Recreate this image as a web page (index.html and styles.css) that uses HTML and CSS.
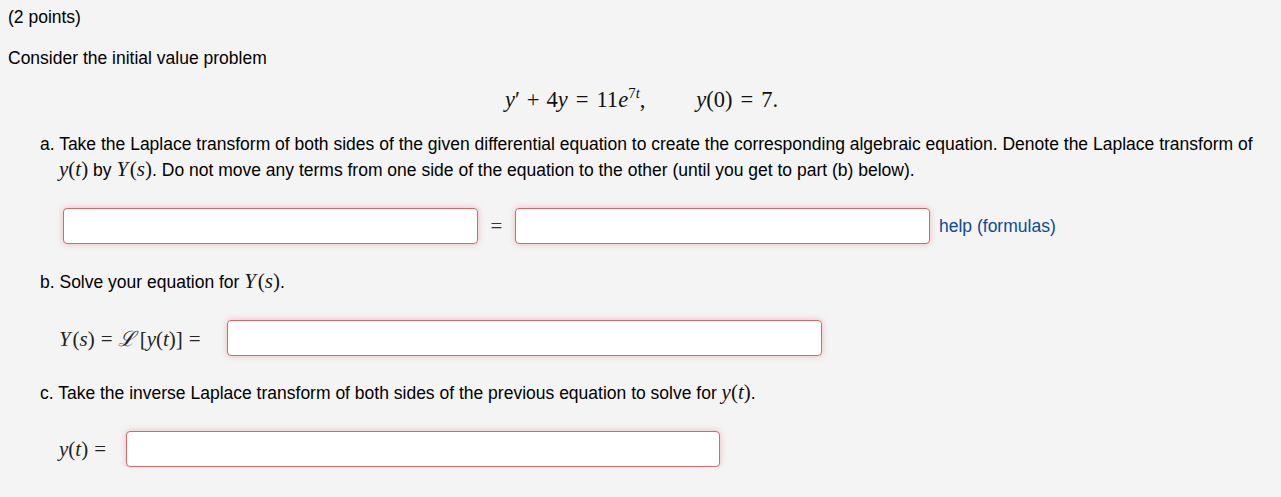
FILE: index.html
```html
<!DOCTYPE html>
<html>
<head>
<meta charset="utf-8">
<link rel="stylesheet" href="styles.css">
</head>
<body>
<div class="points">(2 points)</div>
<div class="intro">Consider the initial value problem</div>
<div class="display">
  <span class="m"><i>y</i>&#8242;<span class="op">+</span>4<i>y</i><span class="op rel">=</span>11<i>e</i><sup><span class="up">7</span><i>t</i></sup>,</span>
  <span class="m gap"><i>y</i>(0)<span class="op rel">=</span>7.</span>
</div>
<div class="part">
  <p class="ptext">a. Take the Laplace transform of both sides of the given differential equation to create the corresponding algebraic equation. Denote the Laplace transform of <span class="m"><i>y</i>(<i>t</i>)</span> by <span class="m"><i>Y</i>&#8202;(<i>s</i>)</span>. Do not move any terms from one side of the equation to the other (until you get to part (b) below).</p>
  <div class="row row-a">
    <div class="box box-a"></div>
    <span class="m eq">=</span>
    <div class="box box-a"></div>
    <a class="help">help (formulas)</a>
  </div>
  <p class="ptext single pb">b. Solve your equation for <span class="m"><i>Y</i>&#8202;(<i>s</i>)</span>.</p>
  <div class="row row-b">
    <span class="m lbl lbl-b"><i>Y</i>&#8202;(<i>s</i>)<span class="op rel">=</span><span class="script">&#8466;</span>&#8201;[<i>y</i>(<i>t</i>)]<span class="op rel">=</span></span>
    <div class="box box-b"></div>
  </div>
  <p class="ptext single pc">c. Take the inverse Laplace transform of both sides of the previous equation to solve for <span class="m"><i>y</i>(<i>t</i>)</span>.</p>
  <div class="row row-c">
    <span class="m lbl lbl-c"><i>y</i>(<i>t</i>)<span class="op rel">=</span></span>
    <div class="box box-c"></div>
  </div>
</div>
</body>
</html>
```
FILE: styles.css
```css
html, body {
  background: #f4f4f4;
}
body {
  margin: 8px;
  font-family: "Liberation Sans", Arial, sans-serif;
  font-size: 17.5px;
  color: #000;
}
.points {
  line-height: 18px;
}
.intro {
  line-height: 18px;
  margin-top: 23px;
}
.m {
  font-family: "Liberation Serif", "Times New Roman", serif;
  font-size: 21px;
  color: #111;
}
.m i {
  font-style: italic;
}
.op {
  margin: 0 5px;
}
.op.rel {
  margin: 0 6px;
}
.display {
  margin-top: 21px;
  height: 24px;
  line-height: 24px;
  text-align: center;
  padding-left: 2px;
}
.display .m {
  font-size: 22.5px;
}
.display .op {
  margin: 0 7px;
}
.display .op.rel {
  margin: 0 8px;
}
.display sup {
  font-size: 15px;
  line-height: 0;
  vertical-align: 9px;
}
.gap {
  margin-left: 46px;
}
.part {
  margin-left: 32px;
}
.ptext {
  margin: 20px 0 0 0;
  line-height: 25px;
  padding-left: 19px;
  text-indent: -19px;
}
.ptext.single {
  line-height: 24px;
}
.ptext.pb {
  margin-top: 25px;
}
.ptext.pc {
  margin-top: 24px;
}
.row {
  display: flex;
  align-items: center;
  height: 36px;
  margin-top: 26px;
}
.row-a {
  margin-top: 25px;
  margin-left: 23px;
}
.row-b, .row-c {
  margin-left: 19px;
}
.box {
  flex: none;
  height: 34px;
  background: #fff;
  border: 1px solid #d9666b;
  border-radius: 4px;
  box-shadow: 0 0 6px rgba(217, 102, 107, 0.4);
}
.box-a {
  width: 413px;
}
.eq {
  width: 37px;
  text-align: center;
  color: #333;
}
.help {
  margin-left: 9px;
  color: #0d4a95;
}
.lbl {
  color: #222;
  white-space: nowrap;
}
.lbl-b {
  width: 168px;
}
.lbl-c {
  width: 67px;
}
.script {
  font-style: italic;
}
.box-b {
  width: 593px;
}
.box-c {
  width: 592px;
}
```
